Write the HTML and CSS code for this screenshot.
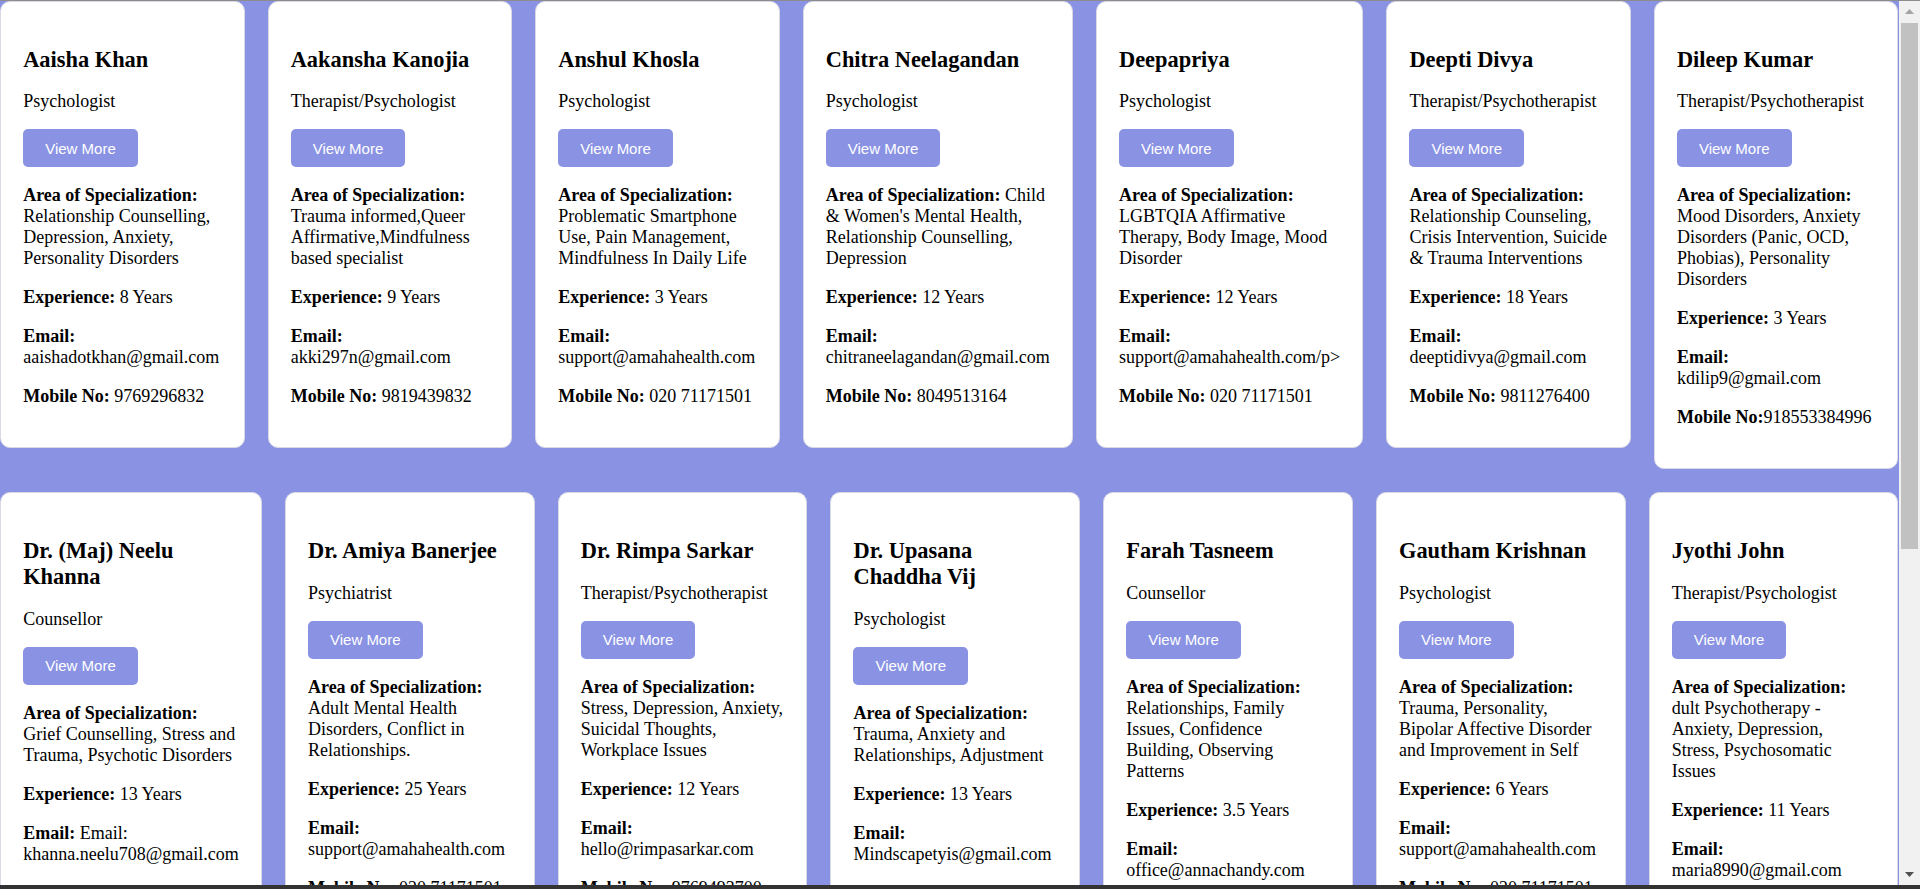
FILE: index.html
```html
<!DOCTYPE html>
<html lang="en">
<head>
<meta charset="utf-8">
<title>Our Experts</title>
<link rel="stylesheet" href="styles.css">
</head>
<body>
<main class="doctors">
  <article class="card">
    <h2 class="card-name">Aaisha Khan</h2>
    <p>Psychologist</p>
    <button class="btn" type="button">View More</button>
    <p><strong>Area of Specialization:</strong> Relationship Counselling, Depression, Anxiety, Personality Disorders</p>
    <p><strong>Experience:</strong> 8 Years</p>
    <p><strong>Email:</strong> aaishadotkhan@gmail.com</p>
    <p><strong>Mobile No:</strong> 9769296832</p>
  </article>
  <article class="card">
    <h2 class="card-name">Aakansha Kanojia</h2>
    <p>Therapist/Psychologist</p>
    <button class="btn" type="button">View More</button>
    <p><strong>Area of Specialization:</strong> Trauma informed,Queer Affirmative,Mindfulness based specialist</p>
    <p><strong>Experience:</strong> 9 Years</p>
    <p><strong>Email:</strong> akki297n@gmail.com</p>
    <p><strong>Mobile No:</strong> 9819439832</p>
  </article>
  <article class="card">
    <h2 class="card-name">Anshul Khosla</h2>
    <p>Psychologist</p>
    <button class="btn" type="button">View More</button>
    <p><strong>Area of Specialization:</strong> Problematic Smartphone Use, Pain Management, Mindfulness In Daily Life</p>
    <p><strong>Experience:</strong> 3 Years</p>
    <p><strong>Email:</strong> support@amahahealth.com</p>
    <p><strong>Mobile No:</strong> 020 71171501</p>
  </article>
  <article class="card">
    <h2 class="card-name">Chitra Neelagandan</h2>
    <p>Psychologist</p>
    <button class="btn" type="button">View More</button>
    <p><strong>Area of Specialization:</strong> Child &amp; Women's Mental Health, Relationship Counselling, Depression</p>
    <p><strong>Experience:</strong> 12 Years</p>
    <p><strong>Email:</strong> chitraneelagandan@gmail.com</p>
    <p><strong>Mobile No:</strong> 8049513164</p>
  </article>
  <article class="card">
    <h2 class="card-name">Deepapriya</h2>
    <p>Psychologist</p>
    <button class="btn" type="button">View More</button>
    <p><strong>Area of Specialization:</strong> LGBTQIA Affirmative Therapy, Body Image, Mood Disorder</p>
    <p><strong>Experience:</strong> 12 Years</p>
    <p><strong>Email:</strong> support@amahahealth.com/p&gt;</p>
    <p><strong>Mobile No:</strong> 020 71171501</p>
  </article>
  <article class="card">
    <h2 class="card-name">Deepti Divya</h2>
    <p>Therapist/Psychotherapist</p>
    <button class="btn" type="button">View More</button>
    <p><strong>Area of Specialization:</strong> Relationship Counseling, Crisis Intervention, Suicide &amp; Trauma Interventions</p>
    <p><strong>Experience:</strong> 18 Years</p>
    <p><strong>Email:</strong> deeptidivya@gmail.com</p>
    <p><strong>Mobile No:</strong> 9811276400</p>
  </article>
  <article class="card">
    <h2 class="card-name">Dileep Kumar</h2>
    <p>Therapist/Psychotherapist</p>
    <button class="btn" type="button">View More</button>
    <p><strong>Area of Specialization:</strong> Mood Disorders, Anxiety Disorders (Panic, OCD, Phobias), Personality Disorders</p>
    <p><strong>Experience:</strong> 3 Years</p>
    <p><strong>Email:</strong> kdilip9@gmail.com</p>
    <p><strong>Mobile No:</strong>918553384996</p>
  </article>

  <article class="card">
    <h2 class="card-name">Dr. (Maj) Neelu Khanna</h2>
    <p>Counsellor</p>
    <button class="btn" type="button">View More</button>
    <p><strong>Area of Specialization:</strong> Grief Counselling, Stress and Trauma, Psychotic Disorders</p>
    <p><strong>Experience:</strong> 13 Years</p>
    <p><strong>Email:</strong> Email: khanna.neelu708@gmail.com</p>
    <p><strong>Mobile No:</strong> 9811089708</p>
  </article>
  <article class="card">
    <h2 class="card-name">Dr. Amiya Banerjee</h2>
    <p>Psychiatrist</p>
    <button class="btn" type="button">View More</button>
    <p><strong>Area of Specialization:</strong> Adult Mental Health Disorders, Conflict in Relationships.</p>
    <p><strong>Experience:</strong> 25 Years</p>
    <p><strong>Email:</strong> support@amahahealth.com</p>
    <p><strong>Mobile No:</strong> 020 71171501</p>
  </article>
  <article class="card">
    <h2 class="card-name">Dr. Rimpa Sarkar</h2>
    <p>Therapist/Psychotherapist</p>
    <button class="btn" type="button">View More</button>
    <p><strong>Area of Specialization:</strong> Stress, Depression, Anxiety, Suicidal Thoughts, Workplace Issues</p>
    <p><strong>Experience:</strong> 12 Years</p>
    <p><strong>Email:</strong> hello@rimpasarkar.com</p>
    <p><strong>Mobile No:</strong> 9769493700</p>
  </article>
  <article class="card">
    <h2 class="card-name">Dr. Upasana Chaddha Vij</h2>
    <p>Psychologist</p>
    <button class="btn" type="button">View More</button>
    <p><strong>Area of Specialization:</strong> Trauma, Anxiety and Relationships, Adjustment</p>
    <p><strong>Experience:</strong> 13 Years</p>
    <p><strong>Email:</strong> Mindscapetyis@gmail.com</p>
    <p><strong>Mobile No:</strong> 9899204517</p>
  </article>
  <article class="card">
    <h2 class="card-name">Farah Tasneem</h2>
    <p>Counsellor</p>
    <button class="btn" type="button">View More</button>
    <p><strong>Area of Specialization:</strong> Relationships, Family Issues, Confidence Building, Observing Patterns</p>
    <p><strong>Experience:</strong> 3.5 Years</p>
    <p><strong>Email:</strong> office@annachandy.com</p>
    <p><strong>Mobile No:</strong> 9845011220</p>
  </article>
  <article class="card">
    <h2 class="card-name">Gautham Krishnan</h2>
    <p>Psychologist</p>
    <button class="btn" type="button">View More</button>
    <p><strong>Area of Specialization:</strong> Trauma, Personality, Bipolar Affective Disorder and Improvement in Self</p>
    <p><strong>Experience:</strong> 6 Years</p>
    <p><strong>Email:</strong> support@amahahealth.com</p>
    <p><strong>Mobile No:</strong> 020 71171501</p>
  </article>
  <article class="card">
    <h2 class="card-name">Jyothi John</h2>
    <p>Therapist/Psychologist</p>
    <button class="btn" type="button">View More</button>
    <p><strong>Area of Specialization:</strong> dult Psychotherapy - Anxiety, Depression,<br>Stress, Psychosomatic Issues</p>
    <p><strong>Experience:</strong> 11 Years</p>
    <p><strong>Email:</strong> maria8990@gmail.com</p>
    <p><strong>Mobile No:</strong> 9845578990</p>
  </article>
</main>

<div class="scrollbar" aria-hidden="true">
  <div class="sb-btn">
    <svg width="9" height="5" viewBox="0 0 9 5"><polygon points="0,5 4.5,0 9,5" fill="#a3a3a3"/></svg>
  </div>
  <div class="sb-track"><div class="sb-thumb"></div></div>
  <div class="sb-btn">
    <svg width="9" height="5" viewBox="0 0 9 5"><polygon points="0,0 9,0 4.5,5" fill="#505050"/></svg>
  </div>
</div>
<div class="window-edge" aria-hidden="true"></div>
</body>
</html>
```

FILE: styles.css
```css
* {
  box-sizing: border-box;
}

html,
body {
  margin: 0;
  height: 100%;
  overflow: hidden;
}

body {
  background: #8992e3;
  border-top: 1px solid #8c8c8c;
  font-family: "Liberation Serif", "Times New Roman", serif;
  font-size: 18px;
  color: #000;
}

.doctors {
  display: flex;
  flex-wrap: wrap;
  align-items: flex-start;
  column-gap: 22.9px;
  row-gap: 23.5px;
  margin-right: 21.6px;
}

.card {
  flex: 1 1 230px;
  background: #fff;
  border: 1px solid #d9d9e6;
  border-radius: 10px;
  padding: 26px 22.2px 21.7px;
}

.card-name {
  font-size: 22.4px;
  font-weight: bold;
  margin: 18.6px 0;
}

.card p {
  margin: 18px 0;
}

.btn {
  display: block;
  font-family: "Liberation Sans", Arial, sans-serif;
  font-size: 15px;
  line-height: normal;
  color: #fff;
  background: #8992e3;
  border: 0;
  border-radius: 5px;
  padding: 10.5px 22px;
  margin-top: -1px;
  cursor: pointer;
}

/* window chrome drawn over the page */
.scrollbar {
  position: fixed;
  top: 1px;
  right: 0;
  bottom: 4px;
  width: 21px;
  background: #f1f1f1;
  display: flex;
  flex-direction: column;
}

.sb-btn {
  height: 21.7px;
  width: 17px;
  margin-left: 2px;
  display: flex;
  align-items: center;
  justify-content: center;
  flex: none;
}

.sb-btn svg {
  display: block;
}

.sb-track {
  flex: 1;
}

.sb-thumb {
  margin-left: 2px;
  width: 17px;
  height: 526.6px;
  background: #c1c1c1;
}

.window-edge {
  position: fixed;
  left: 0;
  right: 0;
  bottom: 0;
  height: 4px;
  background: #333;
}
```
